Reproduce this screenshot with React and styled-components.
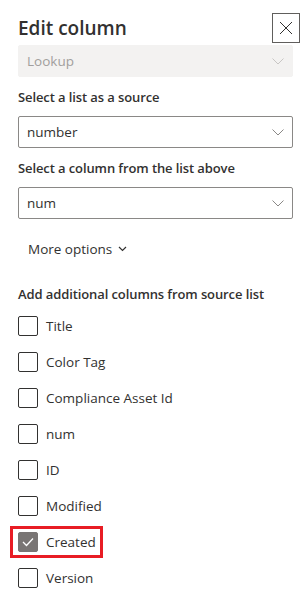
import { createGlobalStyle } from "styled-components"
import styled from "styled-components"

const GlobalStyle = createGlobalStyle`
  body {
    margin: 0;
    background: #ffffff;
    font-family: "Open Sans", "Noto Sans", sans-serif;
    color: #323130;
  }
`

const columns = [
  { name: "Title" },
  { name: "Color Tag" },
  { name: "Compliance Asset Id" },
  { name: "num" },
  { name: "ID" },
  { name: "Modified" },
  { name: "Created", checked: true, highlighted: true },
  { name: "Version" },
]

function Chevron({ color }) {
  return (
    <svg width="12" height="7" viewBox="0 0 12 7">
      <path d="M0.5 0.5 L6 6 L11.5 0.5" fill="none" stroke={color} strokeWidth="1" />
    </svg>
  )
}

function SmallChevron() {
  return (
    <svg width="9" height="6" viewBox="0 0 9 6">
      <path d="M1 1 L4.5 4.5 L8 1" fill="none" stroke="#323130" strokeWidth="1.2" />
    </svg>
  )
}

function CloseIcon() {
  return (
    <svg width="14" height="14" viewBox="0 0 14 14">
      <path d="M1 1 L13 13 M13 1 L1 13" fill="none" stroke="#323130" strokeWidth="1" />
    </svg>
  )
}

function CheckMark() {
  return (
    <svg width="12" height="10" viewBox="0 0 12 10">
      <path d="M1 5 L4.5 8.5 L11 1.5" fill="none" stroke="#ffffff" strokeWidth="1.3" />
    </svg>
  )
}

function App() {
  return (
    <>
      <GlobalStyle />
      <Panel>
        <Header>
          <Title>Edit column</Title>
          <CloseButton type="button" aria-label="Close">
            <CloseIcon />
          </CloseButton>
        </Header>

        <Dropdown disabled>
          <span>Lookup</span>
          <Chevron color="#c8c6c4" />
        </Dropdown>

        <Label>Select a list as a source</Label>
        <Dropdown>
          <span>number</span>
          <Chevron color="#8a8886" />
        </Dropdown>

        <Label>Select a column from the list above</Label>
        <Dropdown>
          <span>num</span>
          <Chevron color="#8a8886" />
        </Dropdown>

        <MoreButton type="button">
          More options
          <SmallChevron />
        </MoreButton>

        <Label spaced>Add additional columns from source list</Label>
        <CheckList>
          {columns.map(col => (
            <CheckRow key={col.name}>
              <Box checked={col.checked}>{col.checked && <CheckMark />}</Box>
              <CheckText>{col.name}</CheckText>
              {col.highlighted && <Highlight />}
            </CheckRow>
          ))}
        </CheckList>
      </Panel>
    </>
  )
}

const Panel = styled.div`
  width: 304px;
  box-sizing: border-box;
  padding: 13px 11px 0 18px;
  display: flex;
  flex-direction: column;
  align-items: stretch;
`

const Header = styled.div`
  display: flex;
  align-items: center;
  justify-content: space-between;
  height: 30px;
  margin-bottom: 2px;
`

const Title = styled.h1`
  margin: 0;
  font-size: 19px;
  line-height: 28px;
  font-weight: 600;
  color: #323130;
`

const CloseButton = styled.button`
  width: 28px;
  height: 30px;
  margin-right: -7px;
  padding: 0;
  display: flex;
  align-items: center;
  justify-content: center;
  background: #ffffff;
  border: 1px solid #605e5c;
  border-radius: 0;
`

const Dropdown = styled.div`
  height: 32px;
  box-sizing: border-box;
  display: flex;
  align-items: center;
  justify-content: space-between;
  padding: 0 8px 0 8px;
  font-size: 13.5px;
  border-radius: 2px;
  border: 1px solid ${props => (props.disabled ? "#f3f2f1" : "#8a8886")};
  background: ${props => (props.disabled ? "#f3f2f1" : "#ffffff")};
  color: ${props => (props.disabled ? "#a19f9d" : "#323130")};
`

const Label = styled.div`
  margin-top: ${props => (props.spaced ? "10px" : "5px")};
  padding: 5px 0;
  font-size: 13px;
  line-height: 20px;
  font-weight: 600;
  letter-spacing: -0.1px;
  color: #323130;
  & + ${Dropdown} {
    margin-top: 4px;
  }
`

const MoreButton = styled.button`
  align-self: flex-start;
  margin-top: 10px;
  height: 40px;
  padding: 0 10px;
  display: flex;
  align-items: center;
  gap: 6px;
  background: transparent;
  border: 0;
  font-family: inherit;
  font-size: 13.5px;
  color: #323130;
`

const CheckList = styled.div`
  display: flex;
  flex-direction: column;
  align-items: flex-start;
  gap: 16px;
  margin-top: 7px;
`

const CheckRow = styled.div`
  position: relative;
  display: flex;
  align-items: center;
  gap: 8px;
  height: 20px;
`

const Box = styled.span`
  width: 20px;
  height: 20px;
  box-sizing: border-box;
  border-radius: 2px;
  display: flex;
  align-items: center;
  justify-content: center;
  border: 1px solid ${props => (props.checked ? "#797574" : "#323130")};
  background: ${props => (props.checked ? "#797574" : "#ffffff")};
`

const CheckText = styled.span`
  font-size: 13.5px;
  line-height: 20px;
  color: #323130;
`

const Highlight = styled.span`
  position: absolute;
  top: -6px;
  bottom: -6px;
  left: -8px;
  right: -7px;
  border: 3px solid #e81c24;
  pointer-events: none;
`

export default App
